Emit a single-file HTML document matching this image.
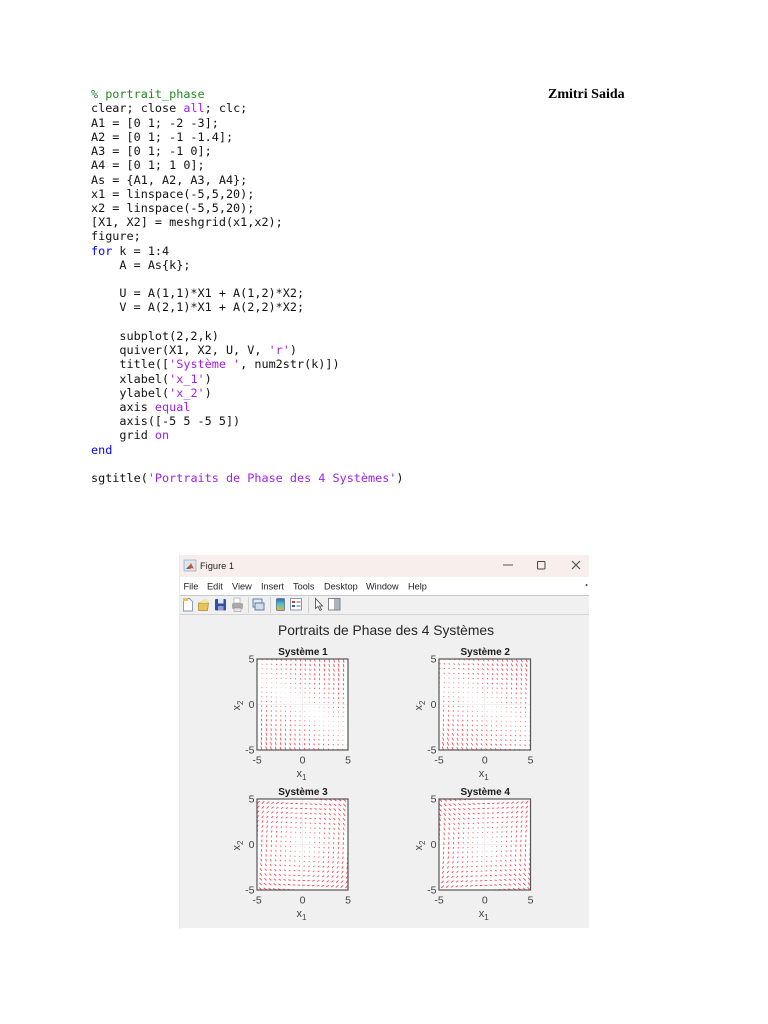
<!DOCTYPE html>
<html><head><meta charset="utf-8"><style>
html,body{margin:0;padding:0;background:#fff;width:768px;height:1024px;overflow:hidden}
pre{position:absolute;left:91px;top:87.200px;margin:0;font:11.8px/14.22px "DejaVu Sans Mono","Liberation Mono",monospace;color:#111;filter:blur(.25px)}
.c{color:#1f8a1f}.k{color:#0000ff}.s{color:#a020f0}
#n{position:absolute;left:548px;top:86px;font:bold 14px/17px "Liberation Serif",serif;color:#000;white-space:nowrap}
#f{position:absolute;left:179px;top:555px;filter:blur(.3px)}
</style></head><body>
<pre><span class="c">% portrait_phase</span>
clear; close <span class="s">all</span>; clc;
A1 = [0 1; -2 -3];
A2 = [0 1; -1 -1.4];
A3 = [0 1; -1 0];
A4 = [0 1; 1 0];
As = {A1, A2, A3, A4};
x1 = linspace(-5,5,20);
x2 = linspace(-5,5,20);
[X1, X2] = meshgrid(x1,x2);
figure;
<span class="k">for</span> k = 1:4
    A = As{k};

    U = A(1,1)*X1 + A(1,2)*X2;
    V = A(2,1)*X1 + A(2,2)*X2;

    subplot(2,2,k)
    quiver(X1, X2, U, V, <span class="s">'r'</span>)
    title([<span class="s">'Système '</span>, num2str(k)])
    xlabel(<span class="s">'x_1'</span>)
    ylabel(<span class="s">'x_2'</span>)
    axis <span class="s">equal</span>
    axis([-5 5 -5 5])
    grid <span class="s">on</span>
<span class="k">end</span>

sgtitle(<span class="s">'Portraits de Phase des 4 Systèmes'</span>)</pre>
<div id="n">Zmitri Saida</div>
<svg id="f" width="411" height="374" viewBox="179 555 411 374" font-family="Liberation Sans, sans-serif">
<rect x="179" y="555" width="1" height="374" fill="#e8e8e8"/>
<rect x="180" y="555" width="409" height="22" fill="#f8efed"/>
<rect x="180" y="577" width="409" height="18" fill="#fff"/>
<rect x="180" y="595" width="409" height="1" fill="#c8c8c8"/>
<rect x="180" y="596" width="409" height="332" fill="#f0f0f0"/>
<rect x="180" y="614" width="409" height="1" fill="#d4d4d4"/>
<!-- title bar -->
<rect x="184" y="560" width="12" height="11" fill="#dfe6f0" stroke="#8a97aa" stroke-width=".6"/>
<path d="M186 569l3-3 2-3 3 6-2-1-2 1z" fill="#d9541e"/>
<path d="M186 569l3-3 1 2z" fill="#2c6fb0"/>
<text x="200" y="569" font-size="9.300" fill="#222">Figure 1</text>
<path d="M503 565h10" stroke="#555" stroke-width="1"/>
<rect x="537.500" y="561.500" width="7.500" height="7.500" rx="1" fill="none" stroke="#444" stroke-width="1"/>
<path d="M572 561l8 8M580 561l-8 8" stroke="#444" stroke-width="1"/>
<!-- menu -->
<g font-size="9.200" fill="#222">
<text x="183.500" y="589.500">File</text><text x="207" y="589.500">Edit</text><text x="232" y="589.500">View</text><text x="261" y="589.500">Insert</text><text x="293" y="589.500">Tools</text><text x="324" y="589.500">Desktop</text><text x="366" y="589.500">Window</text><text x="408" y="589.500">Help</text>
</g>
<circle cx="586.500" cy="585" r="1" fill="#444"/>
<!-- toolbar -->
<path d="M183.500 598.500h6l3 3v9.500h-9z" fill="#fff" stroke="#7d96b8" stroke-width=".9"/>
<path d="M183 598h5v3h-5z" fill="#f2c24a"/>
<path d="M198.500 603h10l-1 7.500h-9z" fill="#e9c25a" stroke="#a98a35" stroke-width=".7"/>
<path d="M201 601l4-2 3 1-1 3h-6z" fill="#f3e3a6"/>
<rect x="215" y="599" width="11" height="11.500" rx="1" fill="#2f4fa6"/>
<rect x="218" y="599" width="5.500" height="4.500" fill="#dfe6f4"/>
<rect x="218" y="606" width="5.500" height="4.500" fill="#8fa0cf"/>
<rect x="234" y="598" width="6" height="5" fill="#fff" stroke="#999" stroke-width=".6"/>
<rect x="232" y="603" width="11" height="6" rx="1.500" fill="#a9a9a9"/>
<rect x="234" y="608" width="7" height="3.500" fill="#e6e6e6" stroke="#888" stroke-width=".5"/>
<rect x="248" y="597" width="1" height="16" fill="#d0d0d0"/>
<rect x="253" y="599" width="9" height="8" fill="#dfe8f2" stroke="#5f7ea6" stroke-width="1"/>
<rect x="255" y="603" width="9" height="7" fill="#cfdcea" stroke="#5f7ea6" stroke-width="1"/>
<rect x="270" y="597" width="1" height="16" fill="#d0d0d0"/>
<defs><linearGradient id="g" x1="0" y1="0" x2="0" y2="1"><stop offset="0" stop-color="#2a63c8"/><stop offset=".5" stop-color="#57c8b8"/><stop offset="1" stop-color="#f0b030"/></linearGradient></defs>
<rect x="276.500" y="598.500" width="8" height="12" rx="1" fill="url(#g)" stroke="#5c6f8c" stroke-width=".8"/>
<rect x="290.500" y="598.500" width="11" height="11.500" fill="#fff" stroke="#6c80a0" stroke-width=".8"/>
<path d="M292 601h3v2h-3z" fill="#d8352a"/><path d="M292 605h3v2h-3z" fill="#2f55b5"/><path d="M296.500 602h4M296.500 606h4" stroke="#667" stroke-width="1"/>
<rect x="308" y="597" width="1" height="16" fill="#d0d0d0"/>
<path d="M315.500 598.500v10l2.500-2 2 4 1.500-.8-2-3.700h3z" fill="#fff" stroke="#444" stroke-width=".8"/>
<rect x="328.500" y="598.500" width="11.500" height="11.500" fill="#fff" stroke="#667" stroke-width=".8"/>
<rect x="334" y="599" width="5.500" height="10.500" fill="#aab4c0"/>
<!-- sgtitle -->
<text x="278" y="635" font-size="14" fill="#262626" textLength="216" lengthAdjust="spacingAndGlyphs">Portraits de Phase des 4 Systèmes</text>
<g id="plots"></g>
</svg>
<script>
(function(){
var P=[[257,659,91,91,[0,1,-2,-3],'Système 1'],[439,659,91.500,91,[0,1,-1,-1.4],'Système 2'],[257,799,91,91,[0,1,-1,0],'Système 3'],[439,799,91.500,91,[0,1,1,0],'Système 4']];
var s='';
P.forEach(function(p){
 var L=p[0],T=p[1],W=p[2],H=p[3],A=p[4],R=L+W,B=T+H,cx=L+W/2,cy=T+H/2;
 s+='<rect x="'+L+'" y="'+T+'" width="'+W+'" height="'+H+'" fill="#fff"/>';
 s+='<path d="M'+cx+' '+T+'V'+B+'M'+L+' '+cy+'H'+R+'" stroke="#e6e6e6" stroke-width=".6"/>';
 var i,j,x,y,u,v,m=0,h=10/19,arr=[];
 for(i=0;i<20;i++)for(j=0;j<20;j++){x=-5+i*h;y=-5+j*h;u=A[0]*x+A[1]*y;v=A[2]*x+A[3]*y;arr.push([x,y,u,v]);m=Math.max(m,Math.sqrt(u*u+v*v));}
 var k=0.85*h/m,d='';
 arr.forEach(function(a){
  var px=W/10,x0=cx+a[0]*px,y0=cy-a[1]*px,x1=x0+a[2]*k*px,y1=y0-a[3]*k*px;
  d+='M'+x0.toFixed(2)+' '+y0.toFixed(2)+'L'+x1.toFixed(2)+' '+y1.toFixed(2);
 });
 s+='<svg x="'+L+'" y="'+T+'" width="'+W+'" height="'+H+'" viewBox="'+L+' '+T+' '+W+' '+H+'" overflow="hidden"><path d="'+d+'" fill="none" stroke="#ff1a2a" stroke-width=".85" stroke-opacity=".85"/></svg>';
 s+='<rect x="'+L+'" y="'+T+'" width="'+W+'" height="'+H+'" fill="none" stroke="#555" stroke-width="1.200"/>';
 s+='<text x="'+(cx+.5)+'" y="'+(T-4)+'" font-size="10" font-weight="bold" text-anchor="middle" fill="#1a1a1a">'+p[5]+'</text>';
 var t='font-size="10.500" fill="#404040"';
 s+='<text x="'+(L-2.500)+'" y="'+(T+3.500)+'" text-anchor="end" '+t+'>5</text>';
 s+='<text x="'+(L-2.500)+'" y="'+(cy+3.500)+'" text-anchor="end" '+t+'>0</text>';
 s+='<text x="'+(L-2.500)+'" y="'+(B+3.500)+'" text-anchor="end" '+t+'>-5</text>';
 s+='<text x="'+L+'" y="'+(B+13.500)+'" text-anchor="middle" '+t+'>-5</text>';
 s+='<text x="'+cx+'" y="'+(B+13.500)+'" text-anchor="middle" '+t+'>0</text>';
 s+='<text x="'+R+'" y="'+(B+13.500)+'" text-anchor="middle" '+t+'>5</text>';
 s+='<text x="'+(cx-6)+'" y="'+(B+27)+'" font-size="11" fill="#404040">x<tspan font-size="8" dy="3">1</tspan></text>';
 s+='<text transform="translate('+(L-17)+' '+(cy+6)+') rotate(-90)" font-size="11" fill="#404040">x<tspan font-size="8" dy="3">2</tspan></text>';
});
document.getElementById('plots').innerHTML=s;
})();
</script>
</body></html>
